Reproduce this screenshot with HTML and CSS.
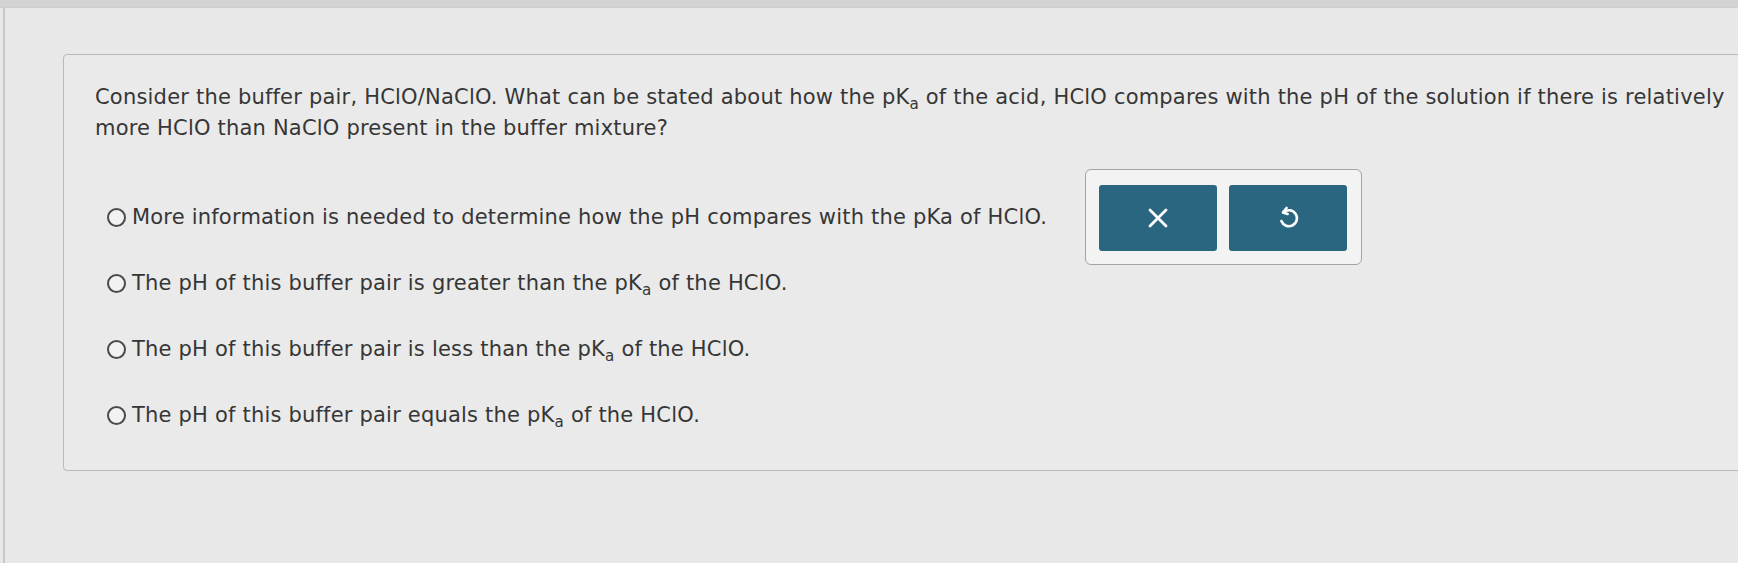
FILE: index.html
```html
<!DOCTYPE html>
<html lang="en">
<head>
<meta charset="utf-8">
<title>Buffer pair question</title>
<link rel="stylesheet" href="styles.css">
</head>
<body>
<div class="topband"></div>
<div class="page">
  <div class="card">
    <p class="question">Consider the buffer pair, HClO/NaClO. What can be stated about how the pK<sub>a</sub> of the acid, HClO compares with the pH of the solution if there is relatively<br>more HClO than NaClO present in the buffer mixture?</p>
    <div class="options">
      <div class="row first">
        <label class="option"><span class="radio"></span><span class="otext">More information is needed to determine how the pH compares with the pKa of HClO.</span></label>
        <div class="tools">
          <button class="tbtn" aria-label="Clear">
            <svg width="28" height="28" viewBox="0 0 28 28"><path d="M6 6 L22 22 M22 6 L6 22" stroke="#fff" stroke-width="2.8" stroke-linecap="round" fill="none"/></svg>
          </button>
          <button class="tbtn" aria-label="Reset">
            <svg width="28" height="28" viewBox="0 0 28 28"><path d="M12.6 4 L9 8.4 L13.6 10" stroke="#fff" stroke-width="2.6" stroke-linecap="round" stroke-linejoin="round" fill="none"/><path d="M9.3 8.5 A8 8 0 1 1 7.4 17" stroke="#fff" stroke-width="2.6" stroke-linecap="round" fill="none"/></svg>
          </button>
        </div>
      </div>
      <div class="row">
        <label class="option"><span class="radio"></span><span class="otext">The pH of this buffer pair is greater than the pK<sub>a</sub> of the HClO.</span></label>
      </div>
      <div class="row">
        <label class="option"><span class="radio"></span><span class="otext">The pH of this buffer pair is less than the pK<sub>a</sub> of the HClO.</span></label>
      </div>
      <div class="row">
        <label class="option"><span class="radio"></span><span class="otext">The pH of this buffer pair equals the pK<sub>a</sub> of the HClO.</span></label>
      </div>
    </div>
  </div>
</div>
</body>
</html>
```

FILE: styles.css
```css
html, body {
  margin: 0;
  padding: 0;
  width: 1738px;
  height: 563px;
  overflow: hidden;
  background: #e8e8e8;
  font-family: "DejaVu Sans", Verdana, sans-serif;
  color: #363636;
}

.topband {
  height: 7px;
  background: #d3d3d3;
  border-bottom: 1px solid #cfcfcf;
}

.page {
  margin-left: 3px;
  border-left: 2px solid #c9c9c9;
  height: 555px;
  padding-top: 46px;
  padding-left: 58px;
  box-sizing: border-box;
}

.card {
  width: 1720px;
  height: 417px;
  box-sizing: border-box;
  border: 1px solid #b9b9b9;
  border-radius: 4px;
  background: #eaeaea;
  padding: 27px 0 0 31px;
}

.question {
  margin: 0;
  font-size: 21px;
  letter-spacing: 0.2px;
  line-height: 31px;
  white-space: nowrap;
}

sub {
  font-size: 0.72em;
  vertical-align: -0.35em;
  line-height: 0;
}

.options {
  display: flex;
  flex-direction: column;
  gap: 40px;
  margin-top: 60px;
  padding-left: 12px;
}

.row {
  display: flex;
  align-items: center;
  height: 26px;
}

.option {
  display: flex;
  align-items: center;
  gap: 6px;
  font-size: 21px;
  letter-spacing: 0.2px;
  line-height: 26px;
  white-space: nowrap;
}

.first .option {
  flex: 0 0 978px;
}

.radio {
  width: 15px;
  height: 15px;
  border: 2px solid #4a4a4a;
  border-radius: 50%;
  flex: 0 0 auto;
  background: #f2f2f2;
}

.tools {
  display: flex;
  gap: 12px;
  padding: 15px 14px 13px 13px;
  border: 1px solid #a3a3a3;
  border-radius: 6px;
  background: #f3f3f3;
  margin: -35px 0;
}

.tbtn {
  width: 118px;
  height: 66px;
  border: none;
  border-radius: 3px;
  background: #2a6680;
  display: flex;
  align-items: center;
  justify-content: center;
  padding: 0;
}
```
